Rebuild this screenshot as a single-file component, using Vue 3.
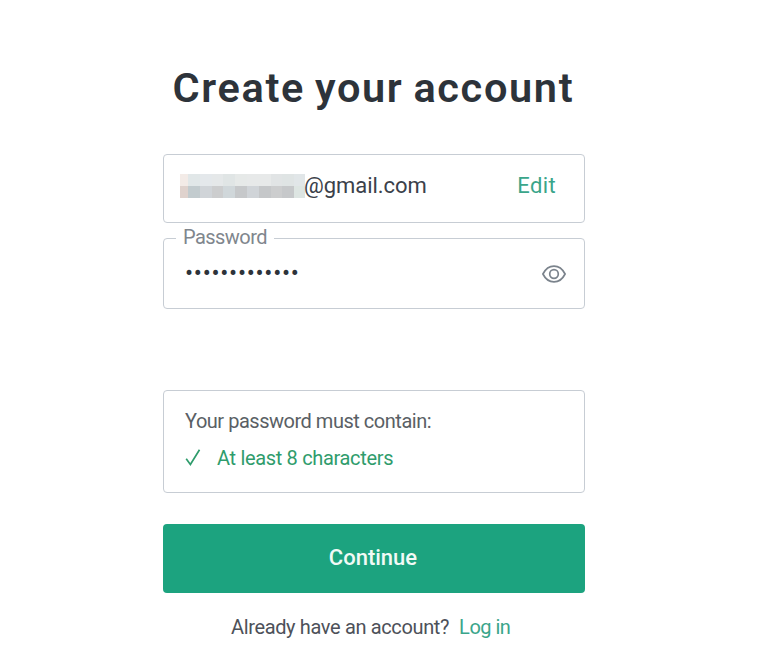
<script setup>
import { ref } from 'vue'

const password = ref('•'.repeat(13))
const mosaic = [
  ['#f3ebe7', '#e1e7e8', '#e4e8eb', '#e5e8e9', '#e0e5e5', '#e6e9e8', '#e7e9e9', '#e7e9e9', '#e1e4e5', '#dfe4e4', '#e1e6e8'],
  ['#dfd2cd', '#c2cbce', '#d0d4d8', '#cccdce', '#d0d7da', '#c6c8ca', '#d0d4d8', '#c5c7c9', '#cccdce', '#c6c8ca', '#dde5e2'],
]
</script>

<template>
  <main class="page">
    <h1 class="title"><span>Create your account</span></h1>

    <div class="field email">
      <div class="mosaic">
        <template v-for="(row, r) in mosaic" :key="r">
          <i v-for="(color, c) in row" :key="c" :style="{ background: color }"></i>
        </template>
      </div>
      <span class="domain">@gmail.com</span>
      <a class="edit">Edit</a>
    </div>

    <div class="field password">
      <label class="label"><span>Password</span></label>
      <span class="dots">{{ password }}</span>
      <svg class="eye" width="24" height="18" viewBox="0 0 24 18" fill="none" stroke="#7b838c" stroke-width="1.7">
        <path d="M.9 9C3.6 3.700 7.400 1.100 12 1.100S20.400 3.700 23.100 9C20.400 14.300 16.600 16.900 12 16.900S3.600 14.300.9 9Z" />
        <circle cx="12" cy="9" r="4.300" />
      </svg>
    </div>

    <section class="field rules">
      <p class="rules-title">Your password must contain:</p>
      <p class="rule">
        <svg width="17" height="18" viewBox="0 0 17 18" fill="none" stroke="#2f9c6c" stroke-width="1.7">
          <path d="M1.200 9.800 5.400 15.500 14.500 .8" />
        </svg>
        <span>At least 8 characters</span>
      </p>
    </section>

    <button class="continue" type="button">Continue</button>

    <p class="footer"><span class="question">Already have an account?</span><a class="login">Log in</a></p>
  </main>
</template>

<style>
body {
  margin: 0;
  background: #fff;
}
</style>

<style scoped>
.page {
  box-sizing: border-box;
  width: 758px;
  height: 646px;
  padding: 64px 173px 0 163px;
  overflow: hidden;
  font-family: Roboto, "Liberation Sans", sans-serif;
  color: #3e444b;
}
.title {
  height: 48px;
  margin: 0 0 42px 9.500px;
  font-size: 41.500px;
  line-height: 48px;
  font-weight: 600;
  letter-spacing: 1.650px;
  word-spacing: -2px;
  color: #2d333a;
  white-space: nowrap;
}
.field {
  box-sizing: border-box;
  width: 422px;
  border: 1.5px solid #c7cdd4;
  border-radius: 4px;
}
.email {
  display: flex;
  align-items: center;
  height: 69px;
  padding: 0 28px 6px 16px;
  font-size: 22px;
}
.mosaic {
  display: grid;
  grid-template-columns: 8px repeat(9, 11.8px) 10.800px;
  grid-template-rows: 12px 12px;
}
.domain {
  margin-left: -1px;
  letter-spacing: -0.05px;
  color: #3b414a;
}
.edit {
  margin-left: auto;
  color: #3aa58a;
  letter-spacing: 0.35px;
}
.password {
  position: relative;
  display: flex;
  align-items: center;
  justify-content: space-between;
  height: 71px;
  margin-top: 15px;
  padding: 1px 18px 0 21px;
}
.label {
  position: absolute;
  top: -14px;
  left: 12px;
  padding: 0 7px;
  background: #fff;
  font-size: 20px;
  line-height: 24px;
  letter-spacing: -0.550px;
  color: #80868d;
}
.dots {
  margin-top: -2px;
  font-size: 24px;
  line-height: 24px;
  letter-spacing: 0.720px;
  color: #2d333a;
}
.eye {
  display: block;
}
.rules {
  height: 103px;
  margin-top: 81px;
  padding: 18px 21px 0;
  font-size: 20px;
  line-height: 24px;
}
.rules p {
  margin: 0;
}
.rules-title {
  letter-spacing: -0.480px;
  color: #5a5f65;
}
.rules .rule {
  display: flex;
  align-items: center;
  gap: 15px;
  margin-top: 13px;
  letter-spacing: -0.330px;
  color: #2f9c6c;
}
.continue {
  display: block;
  width: 422px;
  height: 69px;
  margin: 31px 0 0;
  padding: 0 2px 2px 0;
  border: 0;
  border-radius: 4px;
  background: #1ca37f;
  color: #f1faf6;
  font: 500 22px/24px Roboto, "Liberation Sans", sans-serif;
}
.footer {
  display: flex;
  gap: 10px;
  margin: 22px 0 0 68px;
  font-size: 20px;
  line-height: 24px;
  letter-spacing: -0.360px;
  color: #4d5159;
  white-space: nowrap;
}
.login {
  letter-spacing: -0.500px;
  color: #3aa58a;
}
</style>
